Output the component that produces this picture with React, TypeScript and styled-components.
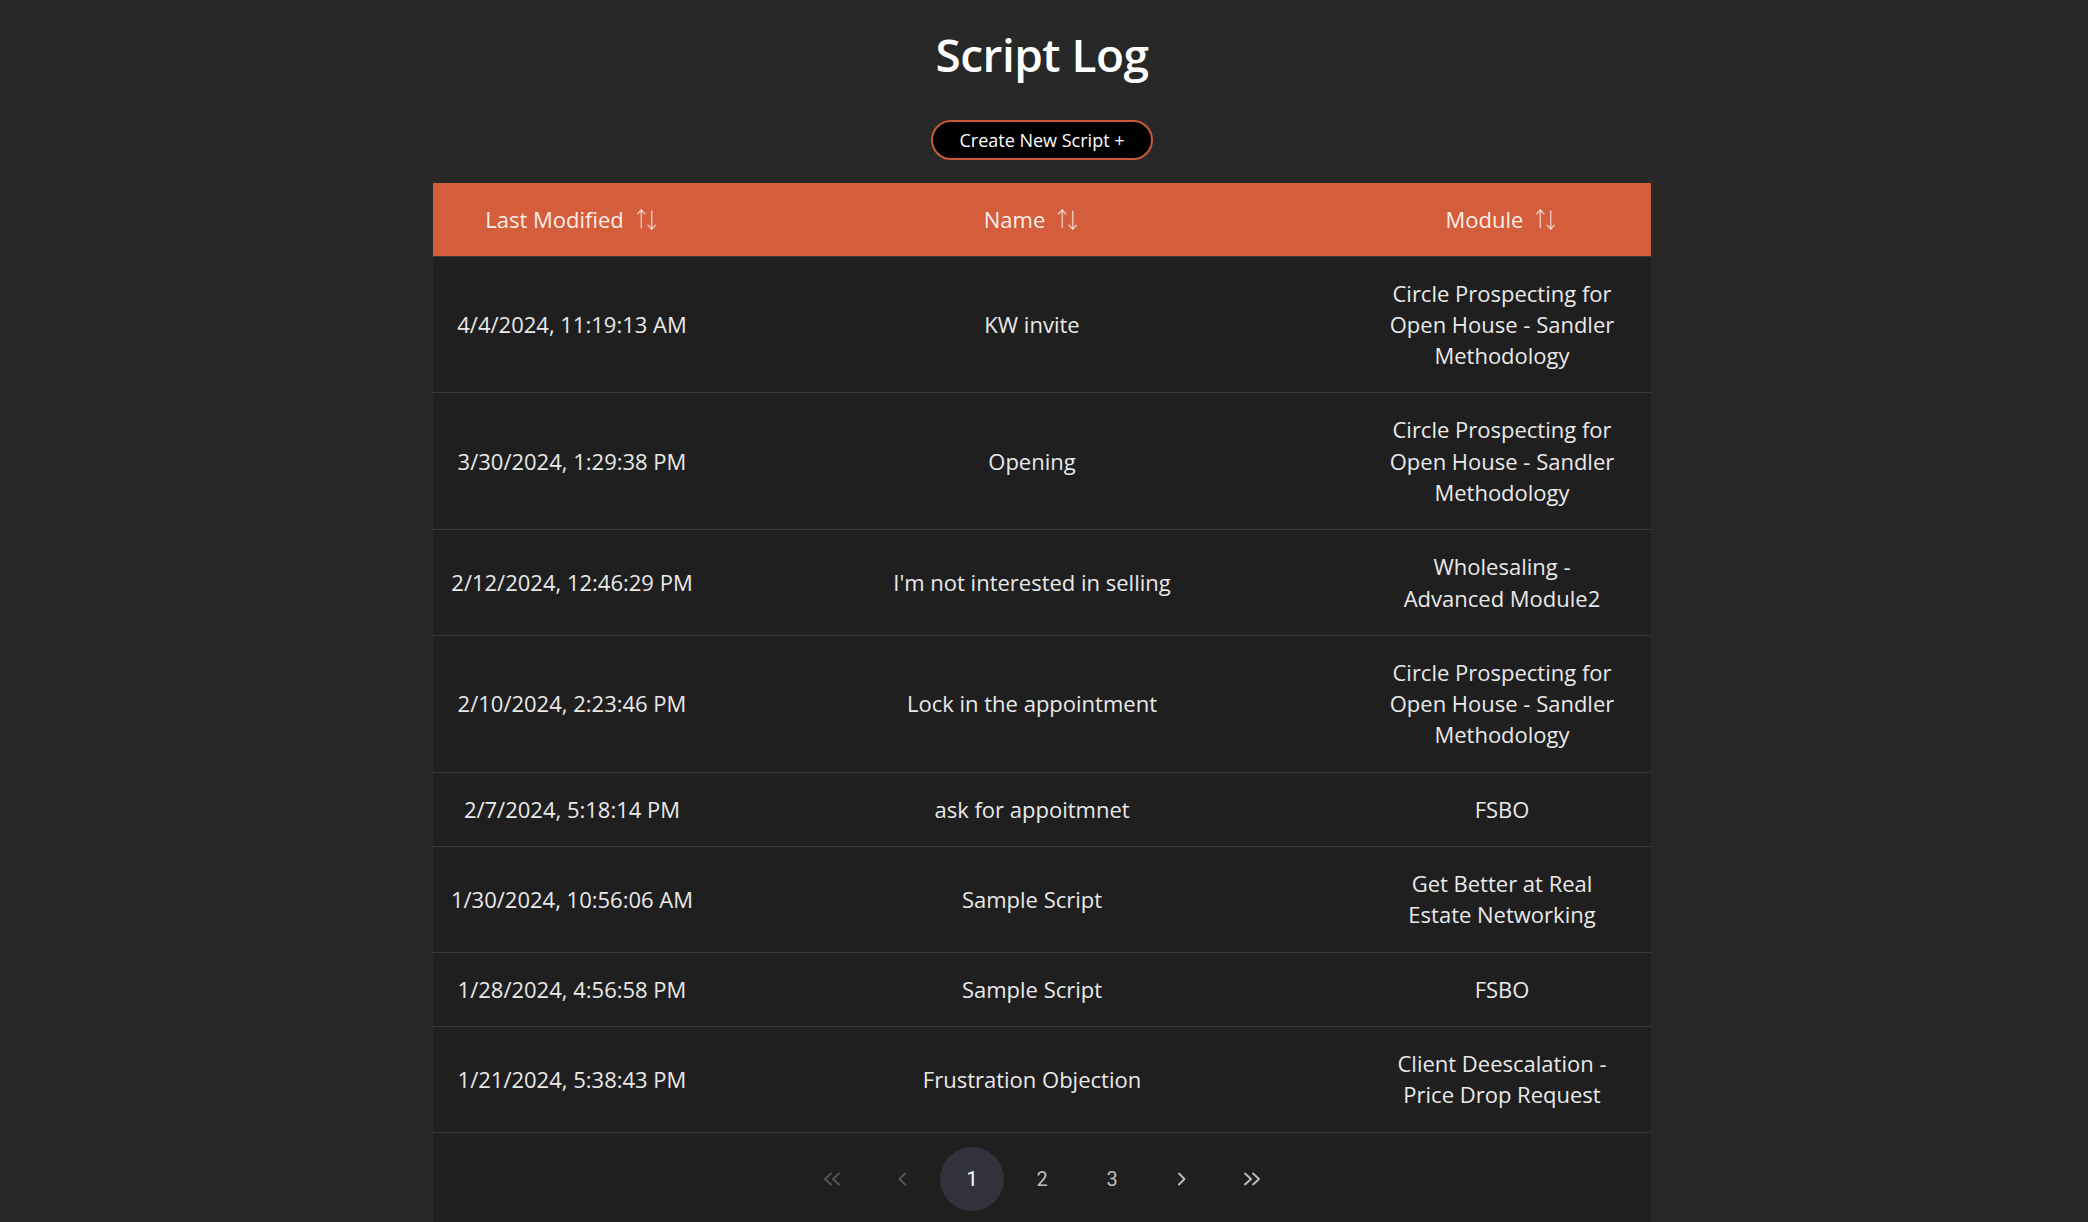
import React from "react";
import styled, { createGlobalStyle } from "styled-components";

const GlobalStyle = createGlobalStyle`
  html, body {
    margin: 0;
    padding: 0;
    background: #282828;
  }
  body {
    font-family: "Open Sans", "Liberation Sans", sans-serif;
    color: #ececec;
  }
`;

const Page = styled.div`
  min-height: 1222px;
  background: #282828;
  display: flex;
  flex-direction: column;
  align-items: center;
  padding: 19px 4px 0 0;
  box-sizing: border-box;
`;

const Title = styled.h1`
  margin: 0;
  font-size: 46px;
  line-height: 70px;
  font-weight: 600;
  color: #ffffff;
  letter-spacing: -0.5px;
`;

const CreateButton = styled.button`
  margin-top: 31px;
  height: 40px;
  width: 222px;
  border-radius: 20px;
  background: #000;
  border: 2px solid #c85a3a;
  color: #fff;
  font-family: "Open Sans", "Liberation Sans", sans-serif;
  font-size: 18px;
  font-weight: 500;
  cursor: pointer;
  box-sizing: border-box;
`;

const TableWrap = styled.div`
  margin-top: 23px;
  width: 1218px;
  background: #1f1f1f;
`;

const Table = styled.table`
  width: 100%;
  border-collapse: collapse;
  table-layout: fixed;
`;

const Col = styled.col<{ $w?: number }>`
  width: ${(p) => (p.$w ? `${p.$w}px` : "auto")};
`;

const HeadRow = styled.tr`
  background: #d45d3b;
  height: 73px;
  border-bottom: 1px solid #3b3b3b;
`;

const HeadCell = styled.th`
  padding: 0 16px;
  font-size: 22px;
  font-weight: 500;
  color: #fbeee9;
  text-align: center;
`;

const HeadInner = styled.span`
  display: inline-flex;
  align-items: center;
  gap: 10px;
`;

const SortIcon = styled.svg`
  width: 25px;
  height: 25px;
  stroke: rgba(255, 255, 255, 0.6);
  fill: none;
  stroke-width: 1.5;
  stroke-linecap: round;
  stroke-linejoin: round;
`;

const Row = styled.tr`
  border-bottom: 1px solid #3b3b3b;
`;

const Cell = styled.td<{ $padX?: number }>`
  padding: 21px ${(p) => p.$padX ?? 34}px;
  font-size: 22px;
  line-height: 31.3px;
  color: #e9e9e9;
  text-align: center;
  vertical-align: middle;
`;

const Pager = styled.nav`
  display: flex;
  justify-content: center;
  align-items: center;
  gap: 6px;
  padding: 14px 0 20px;
  font-family: Roboto, "Liberation Sans", sans-serif;
`;

const PageItem = styled.button<{ $active?: boolean; $disabled?: boolean }>`
  width: 64px;
  height: 64px;
  border-radius: 50%;
  border: none;
  display: flex;
  align-items: center;
  justify-content: center;
  font-family: Roboto, "Liberation Sans", sans-serif;
  font-size: 20px;
  background: ${(p) => (p.$active ? "#33333d" : "transparent")};
  color: ${(p) => (p.$active ? "#ffffff" : p.$disabled ? "#565656" : "#bdbdbd")};
  cursor: pointer;
  padding: 0;
`;

const Chevron = styled.svg`
  width: 24px;
  height: 24px;
  fill: none;
  stroke: currentColor;
  stroke-width: 1.9;
  stroke-linecap: round;
  stroke-linejoin: round;
`;

const Sort = () => (
  <SortIcon viewBox="0 0 24 24">
    <path d="M7 20V3" />
    <path d="M3.5 6.5 7 3l3.5 3.5" />
    <path d="M17 4v17" />
    <path d="M13.5 17.5 17 21l3.5-3.5" />
  </SortIcon>
);

const rows: [string, string, string][] = [
  ["4/4/2024, 11:19:13 AM", "KW invite", "Circle Prospecting for Open House - Sandler Methodology"],
  ["3/30/2024, 1:29:38 PM", "Opening", "Circle Prospecting for Open House - Sandler Methodology"],
  ["2/12/2024, 12:46:29 PM", "I'm not interested in selling", "Wholesaling - Advanced Module2"],
  ["2/10/2024, 2:23:46 PM", "Lock in the appointment", "Circle Prospecting for Open House - Sandler Methodology"],
  ["2/7/2024, 5:18:14 PM", "ask for appoitmnet", "FSBO"],
  ["1/30/2024, 10:56:06 AM", "Sample Script", "Get Better at Real Estate Networking"],
  ["1/28/2024, 4:56:58 PM", "Sample Script", "FSBO"],
  ["1/21/2024, 5:38:43 PM", "Frustration Objection", "Client Deescalation - Price Drop Request"],
];

export default function App() {
  return (
    <>
      <GlobalStyle />
      <Page>
        <Title>Script Log</Title>
        <CreateButton>Create New Script +</CreateButton>
        <TableWrap>
          <Table>
            <colgroup>
              <Col $w={278} />
              <Col $w={642} />
              <Col />
            </colgroup>
            <thead>
              <HeadRow>
                <HeadCell>
                  <HeadInner>
                    Last Modified <Sort />
                  </HeadInner>
                </HeadCell>
                <HeadCell>
                  <HeadInner>
                    Name <Sort />
                  </HeadInner>
                </HeadCell>
                <HeadCell>
                  <HeadInner>
                    Module <Sort />
                  </HeadInner>
                </HeadCell>
              </HeadRow>
            </thead>
            <tbody>
              {rows.map((r, i) => (
                <Row key={i}>
                  <Cell $padX={6}>{r[0]}</Cell>
                  <Cell>{r[1]}</Cell>
                  <Cell>{r[2]}</Cell>
                </Row>
              ))}
            </tbody>
          </Table>
          <Pager>
            <PageItem $disabled>
              <Chevron viewBox="0 0 24 24">
                <path d="M11 6.5 5 12l6 5.5" />
                <path d="M19 6.5 13 12l6 5.5" />
              </Chevron>
            </PageItem>
            <PageItem $disabled>
              <Chevron viewBox="0 0 24 24">
                <path d="M15 6.5 9.5 12l5.5 5.5" />
              </Chevron>
            </PageItem>
            <PageItem $active>1</PageItem>
            <PageItem>2</PageItem>
            <PageItem>3</PageItem>
            <PageItem>
              <Chevron viewBox="0 0 24 24">
                <path d="M9 6.5 14.5 12 9 17.5" />
              </Chevron>
            </PageItem>
            <PageItem>
              <Chevron viewBox="0 0 24 24">
                <path d="M5 6.5 11 12l-6 5.5" />
                <path d="M13 6.5 19 12l-6 5.5" />
              </Chevron>
            </PageItem>
          </Pager>
        </TableWrap>
      </Page>
    </>
  );
}
